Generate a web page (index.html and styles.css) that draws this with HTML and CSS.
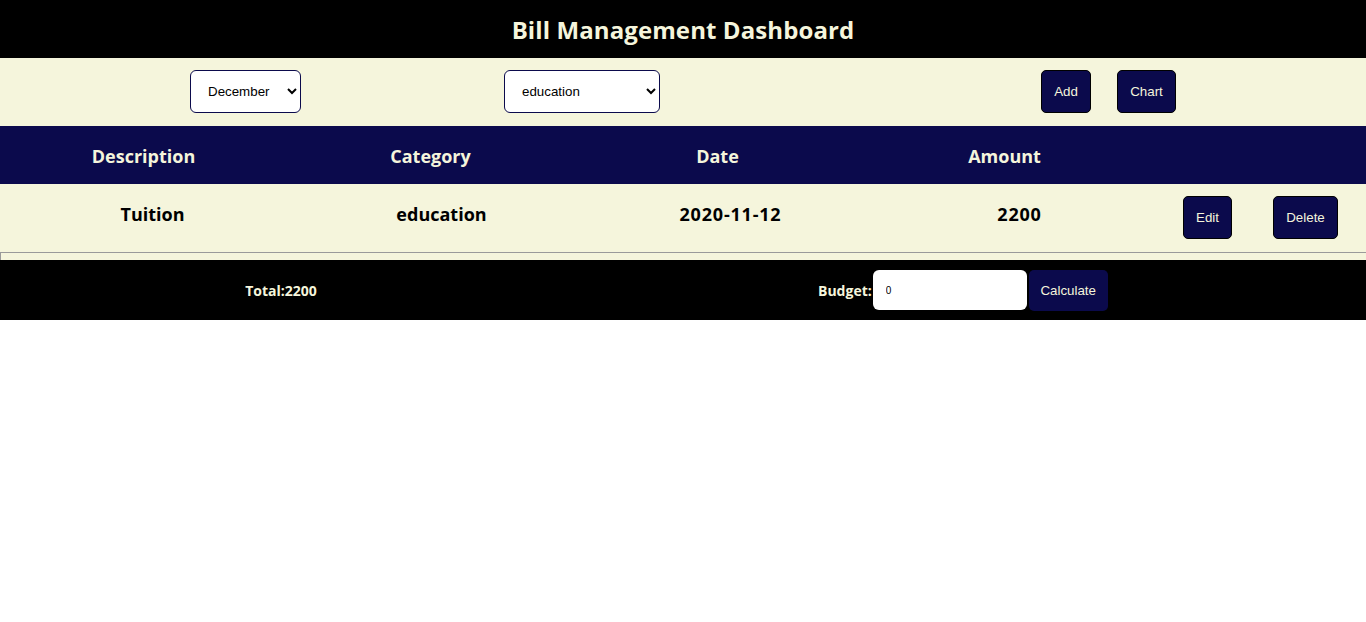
FILE: index.html
```html
<!DOCTYPE html>
<html>
<head>
<meta charset="utf-8">
<link rel="stylesheet" href="styles.css">
</head>
<body>
<header class="topbar"><h1 class="title">Bill Management Dashboard</h1></header>
<div class="toolbar">
  <select class="sel sel-month"><option>December</option></select>
  <select class="sel sel-cat"><option>education</option></select>
  <div class="actions">
    <button class="btn btn-add">Add</button>
    <button class="btn btn-chart">Chart</button>
  </div>
</div>
<div class="thead">
  <div class="th">Description</div>
  <div class="th">Category</div>
  <div class="th">Date</div>
  <div class="th">Amount</div>
</div>
<div class="row">
  <div class="td">Tuition</div>
  <div class="td">education</div>
  <div class="td num">2020-11-12</div>
  <div class="td num">2200</div>
  <div class="row-actions">
    <button class="btn btn-edit">Edit</button>
    <button class="btn btn-delete">Delete</button>
  </div>
</div>
<div class="rule"></div>
<footer class="footer">
  <div class="total">Total:2200</div>
  <div class="budget">
    <label class="budget-label">Budget:</label>
    <input class="budget-input" type="text" value="0">
    <button class="btn btn-calc">Calculate</button>
  </div>
</footer>
</body>
</html>
```
FILE: styles.css
```css
* { box-sizing: border-box; }
body {
  margin: 0;
  background: #ffffff;
  font-family: "Open Sans", "Noto Sans", sans-serif;
}
.topbar {
  background: #000;
  height: 58px;
  display: flex;
  align-items: center;
  justify-content: center;
}
.title {
  margin: 0;
  color: #f5f5dc;
  font-size: 24px;
  font-weight: 700;
  letter-spacing: 0.1px;
}
.toolbar {
  background: #f5f5dc;
  height: 68px;
  display: flex;
  align-items: flex-start;
  padding-top: 12px;
  padding-left: 190px;
}
.sel {
  height: 43px;
  background: #fff;
  border: 1px solid #0b0a4c;
  border-radius: 6px;
  font-family: "Liberation Sans", Arial, sans-serif;
  font-size: 13.33px;
  color: #000;
  padding: 0 8px 0 13px;
}
.sel-month { width: 111px; }
.sel-cat { width: 156px; margin-left: 203px; }
.actions {
  display: flex;
  gap: 26px;
  margin-left: 381px;
}
.btn {
  background: #0b0a4c;
  color: #f5f5dc;
  border: 1px solid #000;
  border-radius: 5px;
  height: 43px;
  font-family: "Liberation Sans", Arial, sans-serif;
  font-size: 13.33px;
  padding: 0;
}
.btn-add { width: 50px; }
.btn-chart { width: 59px; }
.thead {
  background: #0b0a4c;
  height: 58px;
  display: grid;
  grid-template-columns: repeat(4, 287px);
  align-items: center;
}
.th {
  text-align: center;
  color: #f5f5dc;
  font-size: 18px;
  font-weight: 700;
  margin-top: 2px;
}
.row {
  background: #f5f5dc;
  height: 68px;
  display: grid;
  grid-template-columns: 289px 289px 289px 289px 1fr;
  padding-left: 8px;
  padding-top: 12px;
  align-items: start;
}
.td {
  text-align: center;
  color: #000;
  font-size: 18px;
  font-weight: 700;
  line-height: 36px;
}
.num { letter-spacing: 0.8px; }
.row-actions {
  display: flex;
  align-items: center;
  padding-left: 19px;
  gap: 41px;
}
.btn-edit { width: 49px; }
.btn-delete { width: 65px; height: 43px; }
.rule {
  background: #f5f5dc;
  height: 8px;
  border-top: 1px solid #9a9a9a;
  border-left: 1px solid #9a9a9a;
}
.footer {
  background: #000;
  height: 60px;
  display: flex;
  align-items: center;
}
.total {
  width: 562px;
  text-align: center;
  color: #f5f5dc;
  font-size: 14px;
  font-weight: 700;
}
.budget {
  display: flex;
  align-items: center;
  margin-left: 256px;
}
.budget-label {
  color: #f5f5dc;
  font-size: 14px;
  font-weight: 700;
}
.budget-input {
  width: 154px;
  height: 40px;
  border: none;
  border-radius: 6px;
  background: #fff;
  padding: 0 13px;
  font-family: "Liberation Sans", Arial, sans-serif;
  font-size: 10px;
  color: #000;
  margin-left: 1px;
}
.btn-calc {
  width: 79px;
  height: 41px;
  border: none;
  margin-left: 2px;
  font-size: 13.33px;
}
```
